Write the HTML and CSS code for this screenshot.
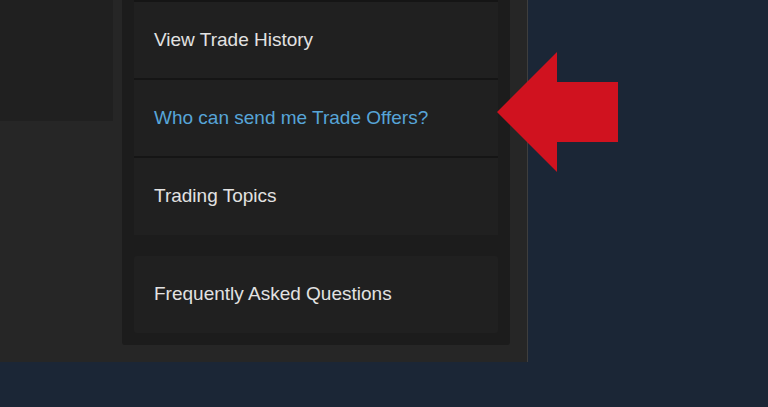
FILE: index.html
```html
<!DOCTYPE html>
<html lang="en">
<head>
    <meta charset="UTF-8">
    <meta name="viewport" content="width=device-width, initial-scale=1.0">
    <title>Trade Offers</title>
    <link rel="stylesheet" href="styles.css">
</head>
<body>
    <div class="page">
        <div class="main-panel"></div>

        <div class="sidebar">
            <div class="link-group">
                <a class="side-link" href="#">View Trade History</a>
                <a class="side-link active" href="#">Who can send me Trade Offers?</a>
                <a class="side-link" href="#">Trading Topics</a>
            </div>
            <div class="link-group faq">
                <a class="side-link" href="#">Frequently Asked Questions</a>
            </div>
        </div>
    </div>

    <!-- pointer over the highlighted link -->
    <svg class="pointer" width="122" height="122" viewBox="0 0 122 122">
        <polygon points="0,60 60,0 60,30 121,30 121,90 60,90 60,120" fill="#d0121f"/>
    </svg>
</body>
</html>
```

FILE: styles.css
```css
body {
    margin: 0;
    background: #1b2636;
    font-family: "Liberation Sans", Arial, sans-serif;
}
.page {
    display: flex;
    align-items: flex-start;
    width: 527px;
    padding-bottom: 17px;
    background: #262626;
    border-right: 1px solid #3e3e3e;
}
.main-panel {
    width: 113px;
    height: 121px;
    background: #202020;
}
.sidebar {
    width: 364px;
    margin-left: 9px;
    padding: 0 12px 12px;
    background: #1c1c1c;
    border-radius: 0 0 3px 3px;
}
.link-group {
    display: flex;
    flex-direction: column;
    padding-bottom: 1px;
    background: #202020;
}
.faq {
    margin-top: 21px;
    border-radius: 3px;
}
.side-link {
    display: flex;
    align-items: center;
    height: 76px;
    padding-left: 20px;
    border-top: 2px solid #151515;
    color: #e2e2e2;
    font-size: 19px;
    text-decoration: none;
}
.faq .side-link {
    border-top: none;
}
.side-link.active {
    color: #57a5d8;
}
.pointer {
    position: absolute;
    left: 497px;
    top: 52px;
}
```
